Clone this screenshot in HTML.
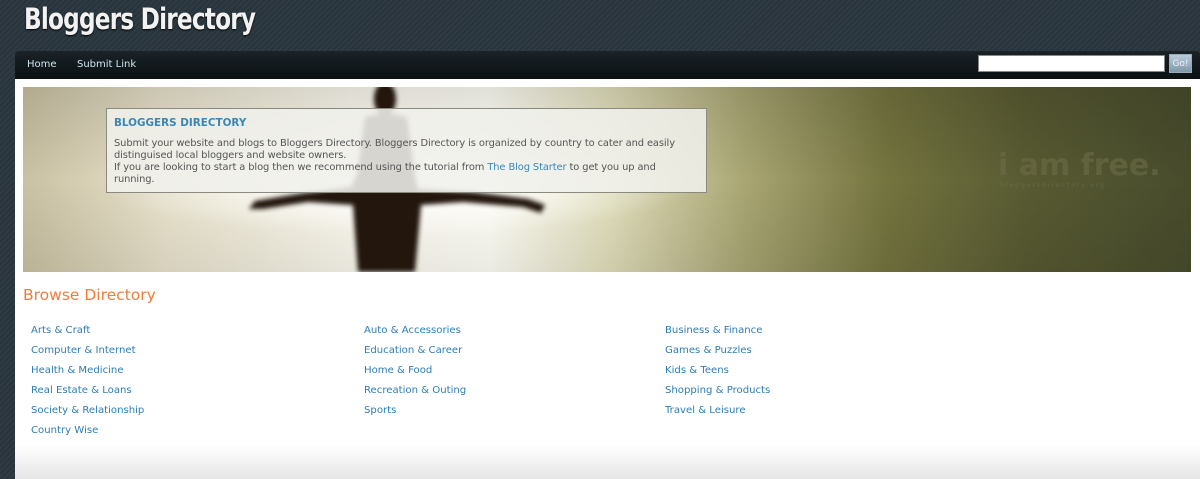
<!DOCTYPE html>
<html><head><meta charset="utf-8"><style>
*{margin:0;padding:0;box-sizing:border-box}
body{width:1200px;height:479px;overflow:hidden;background:#28343c;background-image:repeating-linear-gradient(135deg,rgba(255,255,255,.03) 0 2px,transparent 2px 4px);font-family:"DejaVu Sans","Liberation Sans",sans-serif;position:relative}
.logo{position:absolute;left:24px;top:2px;font:bold 29px "DejaVu Sans","Liberation Sans",sans-serif;color:#f2f2f2;letter-spacing:-1px;text-shadow:0 1px 2px #000;transform:scaleX(.8);transform-origin:left top;white-space:nowrap}
.nav{position:absolute;left:15px;top:51px;width:1185px;height:28px;background:linear-gradient(#1a2328,#0b1013);border-radius:4px 4px 0 0}
.nav a{position:absolute;top:8px;color:#cfe6f2;font-size:10px;text-decoration:none}
.search{position:absolute;left:978px;top:55px;width:187px;height:17px;background:#fff;border:1px solid #888}
.go{position:absolute;left:1169px;top:54px;width:23px;height:19px;background:linear-gradient(#b9cbd6,#7f9aab);color:#eef;font-size:9px;text-align:center;line-height:19px;border:1px solid #9ab}
.main{position:absolute;left:15px;top:79px;width:1185px;height:400px;background:linear-gradient(#fff 0,#fff 365px,#e6e6e6 400px)}
.banner{position:absolute;left:23px;top:87px;width:1168px;height:185px;overflow:hidden;background:linear-gradient(90deg,#c9c1a2 0%,#e8e2cc 12%,#fbf8ee 28%,#fffef6 40%,#e2dfbd 50%,#a8a572 62%,#74743f 74%,#585a32 86%,#484c2c 100%)}
.box{position:absolute;left:106px;top:108px;width:601px;height:85px;background:rgba(240,240,236,.88);border:1px solid #8a8a80;padding:8px 7px;font-size:9.9px;letter-spacing:-0.1px;color:#555;line-height:12px}
.box h4{color:#3a87b5;font-size:10.4px;margin-bottom:9px;letter-spacing:0}
.box a{color:#3a87b5}
h2{position:absolute;left:23px;top:286px;color:#f07d3a;font-weight:normal;font-size:15.5px}
.l{position:absolute;color:#2d7eb5;font-size:10.1px}
</style></head><body>
<div class="logo">Bloggers Directory</div>
<div class="nav"><a style="left:12px">Home</a><a style="left:62px">Submit Link</a></div>
<div class="search"></div><div class="go">Go!</div>
<div class="main"></div>
<div class="banner">
<svg width="1168" height="185" style="position:absolute;left:0;top:0">
<defs><radialGradient id="g" cx="0.32" cy="0.55" r="0.25"><stop offset="0" stop-color="#fff" stop-opacity=".9"/><stop offset="1" stop-color="#fff" stop-opacity="0"/></radialGradient>
<linearGradient id="v" x1="0" y1="0" x2="0" y2="1"><stop offset="0" stop-color="#000" stop-opacity=".12"/><stop offset=".5" stop-color="#000" stop-opacity="0"/><stop offset="1" stop-color="#000" stop-opacity=".08"/></linearGradient>
<filter id="b" x="-20%" y="-20%" width="140%" height="140%"><feGaussianBlur stdDeviation="2.5"/></filter></defs>
<rect width="1168" height="185" fill="url(#v)"/>
<rect width="1168" height="185" fill="url(#g)"/>
<g fill="#24120a" filter="url(#b)">
<ellipse cx="362" cy="12" rx="11" ry="17"/>
<path d="M342 30 Q362 24 384 30 L392 90 L395 102 L450 105 L505 112 L522 118 L518 126 L500 120 L440 115 L398 118 L392 185 L335 185 L330 118 L285 115 L240 122 L226 122 L232 114 L280 106 L328 100 L334 88Z"/>
</g>
<text x="975" y="88" font-size="30" fill="#6f6f4a" font-family="DejaVu Sans" font-weight="bold" opacity=".55">i am free.</text>
<text x="977" y="100" font-size="6" fill="#6f6f4a" letter-spacing="2" opacity=".7">bloggersdirectory.org</text>
</svg>
</div>
<div class="box"><h4>BLOGGERS DIRECTORY</h4>Submit your website and blogs to Bloggers Directory. Bloggers Directory is organized by country to cater and easily distinguised local bloggers and website owners.<br>If you are looking to start a blog then we recommend using the tutorial from <a>The Blog Starter</a> to get you up and running.</div>
<h2>Browse Directory</h2>
<div class="l" style="left:31px;top:325px">Arts &amp; Craft</div>
<div class="l" style="left:31px;top:345px">Computer &amp; Internet</div>
<div class="l" style="left:31px;top:365px">Health &amp; Medicine</div>
<div class="l" style="left:31px;top:385px">Real Estate &amp; Loans</div>
<div class="l" style="left:31px;top:405px">Society &amp; Relationship</div>
<div class="l" style="left:31px;top:425px">Country Wise</div>
<div class="l" style="left:364px;top:325px">Auto &amp; Accessories</div>
<div class="l" style="left:364px;top:345px">Education &amp; Career</div>
<div class="l" style="left:364px;top:365px">Home &amp; Food</div>
<div class="l" style="left:364px;top:385px">Recreation &amp; Outing</div>
<div class="l" style="left:364px;top:405px">Sports</div>
<div class="l" style="left:665px;top:325px">Business &amp; Finance</div>
<div class="l" style="left:665px;top:345px">Games &amp; Puzzles</div>
<div class="l" style="left:665px;top:365px">Kids &amp; Teens</div>
<div class="l" style="left:665px;top:385px">Shopping &amp; Products</div>
<div class="l" style="left:665px;top:405px">Travel &amp; Leisure</div>
</body></html>
